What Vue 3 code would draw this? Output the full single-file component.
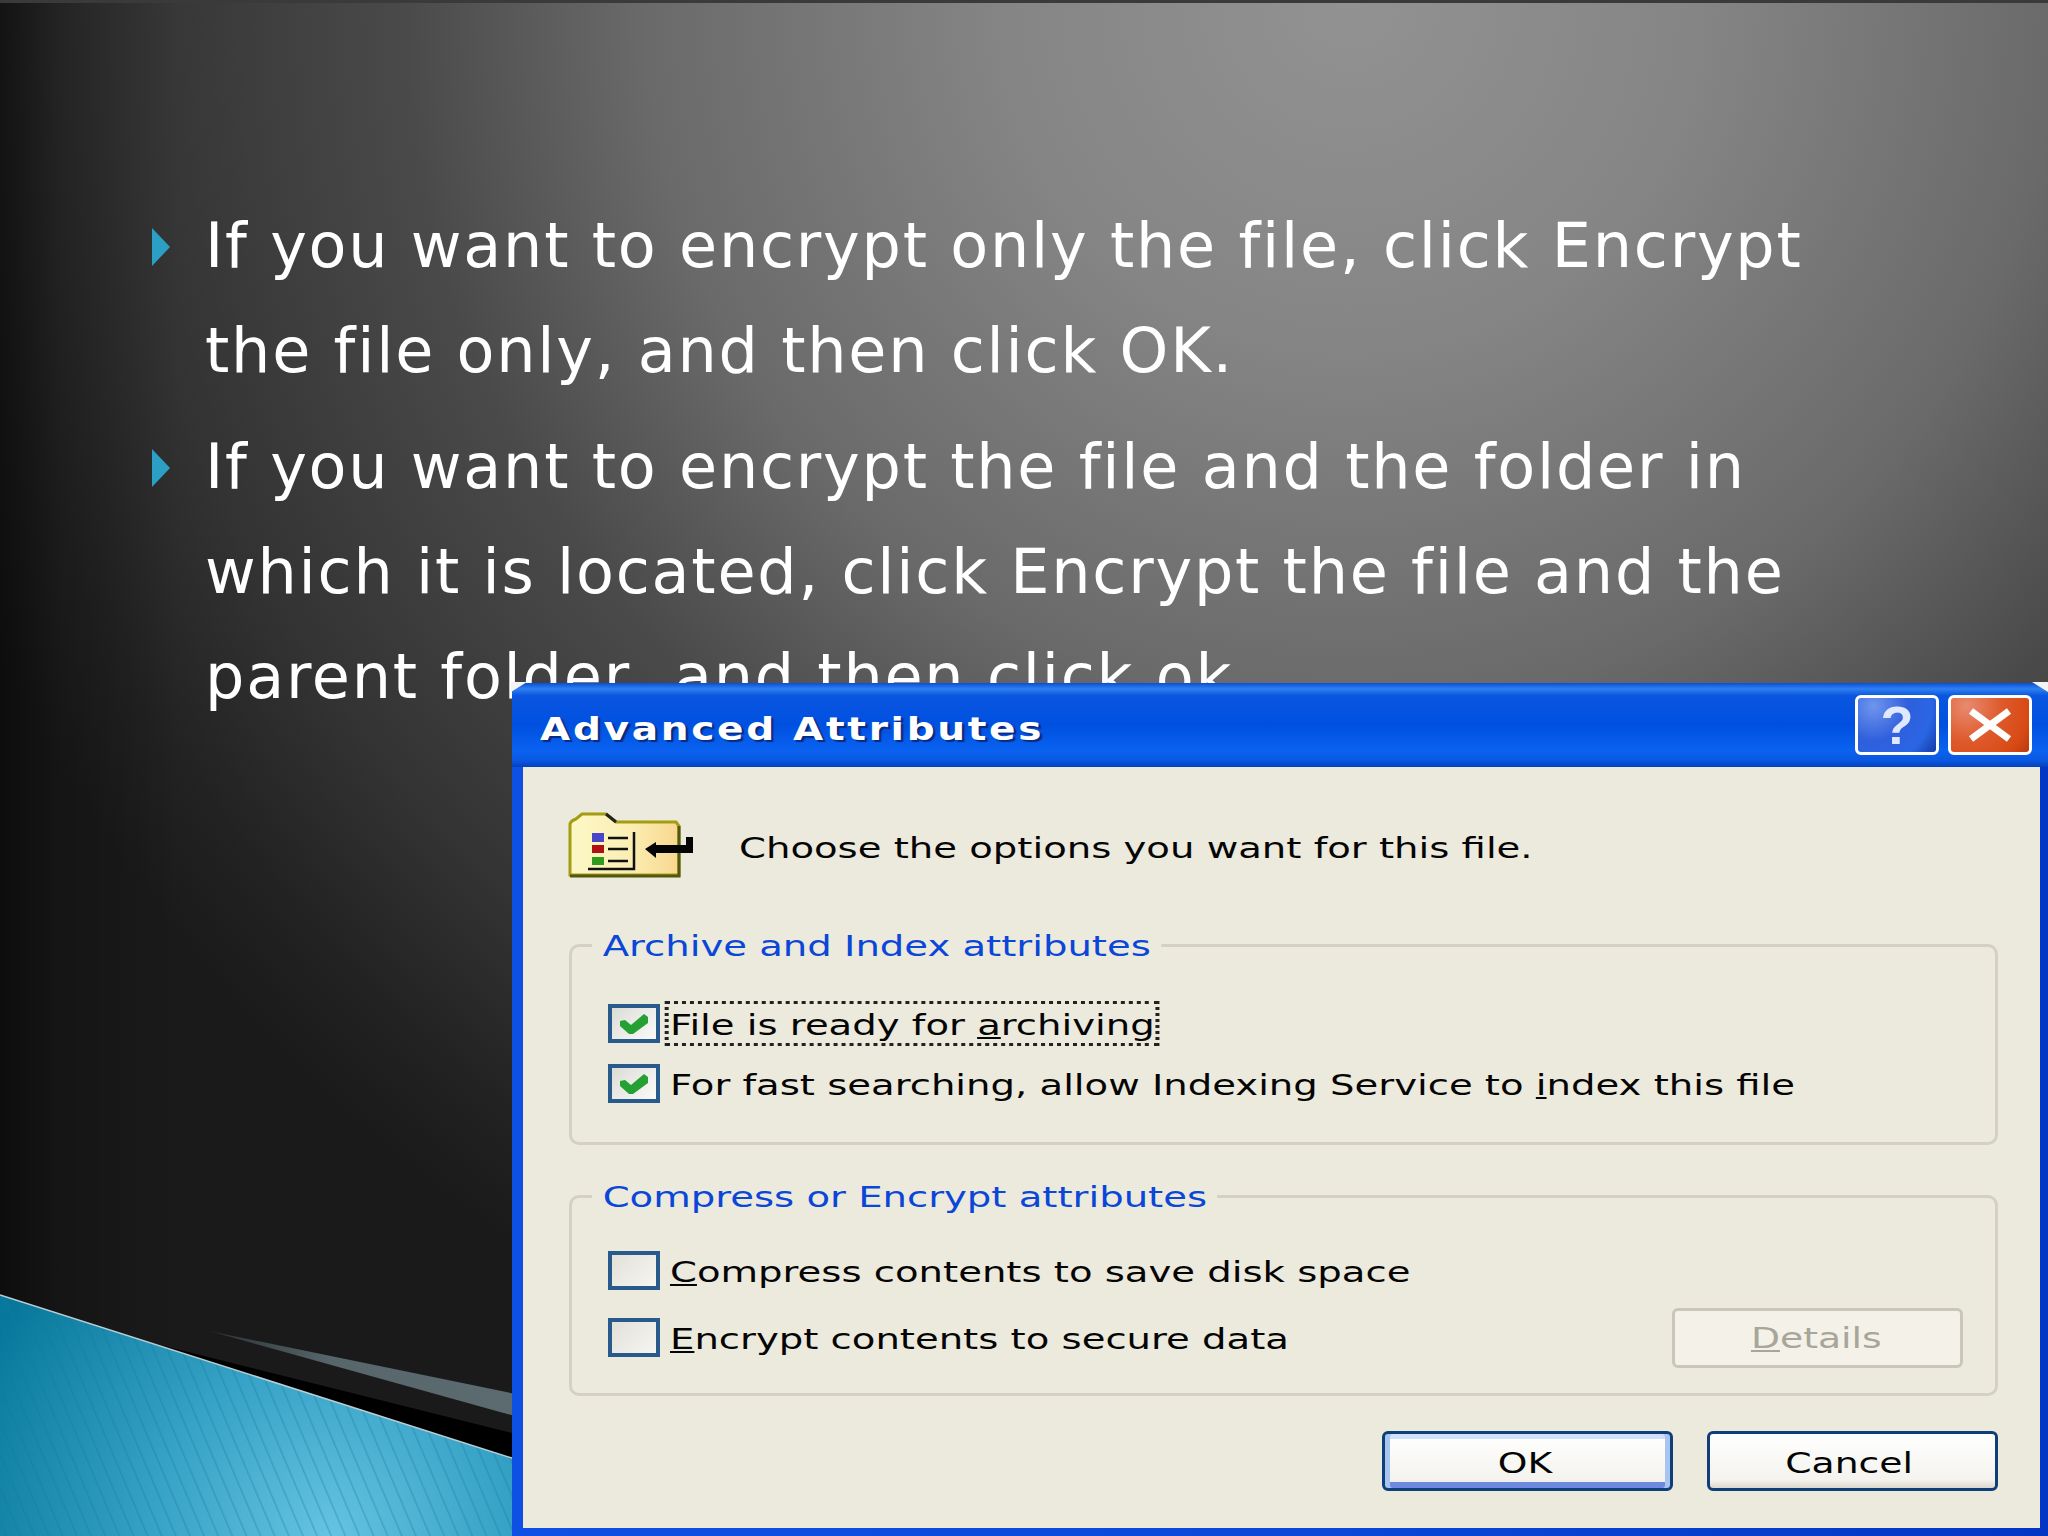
<script setup>
const bullets = [
  ['If you want to encrypt only the file, click Encrypt', 'the file only, and then click OK.'],
  ['If you want to encrypt the file and the folder in', 'which it is located, click Encrypt the file and the', 'parent folder, and then click ok.'],
]
const checkShape = '0,7 5,6 11,11 24,0 28,3 28,9 13,20 9,20 0,12'
</script>

<template>
  <main class="slide">
    <svg class="corner" viewBox="0 0 540 246" width="540" height="246" aria-hidden="true">
      <defs>
        <radialGradient id="blue" gradientUnits="userSpaceOnUse" cx="330" cy="246" r="390">
          <stop offset="0" stop-color="#66c3e2" />
          <stop offset="0.45" stop-color="#37a3c6" />
          <stop offset="1" stop-color="#07789b" />
        </radialGradient>
        <linearGradient id="sliver" gradientUnits="userSpaceOnUse" x1="209" y1="0" x2="512" y2="0">
          <stop offset="0" stop-color="#2a3032" />
          <stop offset="0.4" stop-color="#56666b" />
          <stop offset="1" stop-color="#5c6b70" />
        </linearGradient>
        <pattern id="stripes" width="13" height="13" patternUnits="userSpaceOnUse" patternTransform="rotate(-23)">
          <rect x="0" width="1.5" height="13" fill="#17799a" opacity="0.35" />
        </pattern>
      </defs>
      <polygon points="0,5 540,177 540,246 0,246" fill="url(#blue)" />
      <polygon points="0,5 540,177 540,246 0,246" fill="url(#stripes)" />
      <polygon points="148,52 540,150 540,177" fill="#000" />
      <polygon points="209,41 540,109 540,133" fill="url(#sliver)" />
      <line x1="0" y1="5" x2="540" y2="177" stroke="#b8cfd6" stroke-width="1.5" />
    </svg>

    <section class="points">
      <div v-for="(lines, i) in bullets" :key="i" class="point">
        <svg class="arrow" viewBox="0 0 18 38" width="18" height="38" aria-hidden="true">
          <polygon points="0,0 18,19 0,38" fill="#2ba0c4" />
        </svg>
        <p class="copy">
          <span v-for="line in lines" :key="line" class="line">{{ line }}</span>
        </p>
      </div>
    </section>

    <div class="dialog">
      <header class="titlebar">
        <span class="title">Advanced Attributes</span>
        <div class="caption-buttons">
          <span class="cap help">?</span>
          <span class="cap close">
            <svg viewBox="0 0 44 34" width="44" height="34" aria-hidden="true">
              <path d="M3 3 L41 31 M41 3 L3 31" stroke="#fff" stroke-width="7" fill="none" />
            </svg>
          </span>
        </div>
      </header>

      <div class="client">
        <div class="intro">
          <svg class="folder" viewBox="0 0 126 66" width="126" height="66" aria-hidden="true">
            <defs>
              <linearGradient id="folderFill" x1="0" y1="0" x2="1" y2="0">
                <stop offset="0" stop-color="#fbf8c6" />
                <stop offset="0.55" stop-color="#fbeeb4" />
                <stop offset="1" stop-color="#f8d78e" />
              </linearGradient>
            </defs>
            <path d="M2 63 V13 Q2 9 8 7 L14 2 H38 L48 10 H108 L111 14 V63 Z" fill="url(#folderFill)" stroke="#a49c12" stroke-width="3" />
            <path d="M2 64 H111 V14" fill="none" stroke="#53570f" stroke-width="3" />
            <path d="M38 2 L48 10" stroke="#222" stroke-width="3" />
            <path d="M66 20 V57 H20" fill="none" stroke="#111" stroke-width="2.5" />
            <rect x="24" y="21" width="12" height="9" fill="#4a45c8" />
            <rect x="24" y="33" width="12" height="8" fill="#ad0f12" />
            <rect x="24" y="45" width="12" height="8" fill="#2f9a1c" />
            <path d="M40 26 H60 M40 37 H60 M40 49 H60" stroke="#111" stroke-width="2.5" />
            <path d="M77 37 L88 30 V33 H118 V25 H125 V41 H88 V46 Z" fill="#050505" />
          </svg>
          <span class="stretch intro-text">Choose the options you want for this file.</span>
        </div>

        <div class="group group-one">
          <span class="legend stretch">Archive and Index attributes</span>
          <label class="row">
            <span class="box"><svg viewBox="0 0 28 20" width="28" height="20" aria-hidden="true"><polygon :points="checkShape" fill="#25a032" /></svg></span>
            <span class="text stretch focused">File is ready for <u>a</u>rchiving</span>
          </label>
          <label class="row">
            <span class="box"><svg viewBox="0 0 28 20" width="28" height="20" aria-hidden="true"><polygon :points="checkShape" fill="#25a032" /></svg></span>
            <span class="text stretch">For fast searching, allow Indexing Service to <u>i</u>ndex this file</span>
          </label>
        </div>

        <div class="group group-two">
          <span class="legend stretch">Compress or Encrypt attributes</span>
          <label class="row">
            <span class="box empty"></span>
            <span class="text stretch"><u>C</u>ompress contents to save disk space</span>
          </label>
          <label class="row">
            <span class="box empty"></span>
            <span class="text stretch"><u>E</u>ncrypt contents to secure data</span>
            <button class="details" type="button" disabled><span class="label"><u>D</u>etails</span></button>
          </label>
        </div>

        <footer class="actions">
          <button class="btn default" type="button"><span class="label">OK</span></button>
          <button class="btn" type="button"><span class="label">Cancel</span></button>
        </footer>
      </div>
    </div>
  </main>
</template>

<style>
html, body { margin: 0; background: #000; }
</style>

<style scoped>
.slide {
  position: relative;
  width: 2048px;
  height: 1536px;
  overflow: hidden;
  font-family: "DejaVu Sans", sans-serif;
  background:
    linear-gradient(#3a3a3a, #3a3a3a) 0 0 / 100% 3px no-repeat,
    linear-gradient(90deg, rgba(0, 0, 0, 0.5), rgba(0, 0, 0, 0.2) 60px, rgba(0, 0, 0, 0) 180px),
    radial-gradient(ellipse 1500px 1500px at 1350px 0, #929292 0%, #858585 23%, #6a6a6a 47%, #4a4a4a 63%, #333 82%, #222 93%, #1a1a1a 100%);
}
.corner {
  position: absolute;
  left: 0;
  bottom: 0;
}
.points {
  position: relative;
  padding: 193px 0 0 152px;
}
.point {
  display: flex;
  align-items: flex-start;
  margin-bottom: 11px;
}
.arrow {
  flex: none;
  margin: 35px 35px 0 0;
}
.copy {
  margin: 0;
  color: #fff;
  font-size: 62px;
  line-height: 105px;
  letter-spacing: 1.77px;
  white-space: nowrap;
}
.line { display: block; }

.dialog {
  position: absolute;
  left: 512px;
  top: 683px;
  width: 1536px;
  height: 853px;
  box-sizing: border-box;
  display: flex;
  flex-direction: column;
  padding: 0 8px 8px 11px;
  background: linear-gradient(90deg, #0f50e4 0%, #0a49d8 50%, #0436c4 100%);
}
.dialog::before,
.dialog::after {
  content: "";
  position: absolute;
  top: -1px;
  width: 16px;
  height: 10px;
  background: #f4f4f4;
  z-index: 1;
}
.dialog::before {
  left: -1px;
  clip-path: polygon(0 0, 100% 0, 0 100%);
}
.dialog::after {
  right: 0;
  clip-path: polygon(0 0, 100% 0, 100% 100%);
}
.titlebar {
  flex: none;
  height: 84px;
  margin: 0 -8px 0 -11px;
  padding: 8px 16px 0 28px;
  box-sizing: border-box;
  display: flex;
  align-items: center;
  justify-content: space-between;
  background: linear-gradient(180deg, #0a4fd6 0%, #2f80f0 7%, #0a56e0 15%, #0050e0 50%, #0a62f0 80%, #0a58e0 92%, #0440c0 100%);
}
.title {
  display: inline-block;
  transform: scaleX(1.22);
  transform-origin: left center;
  color: #fff;
  font: bold 32px "DejaVu Sans", sans-serif;
  letter-spacing: 2.2px;
  text-shadow: 2px 2px 1px #0a2a80;
}
.caption-buttons {
  display: flex;
  gap: 9px;
  margin-top: -8px;
}
.cap {
  box-sizing: border-box;
  width: 84px;
  height: 60px;
  display: flex;
  align-items: center;
  justify-content: center;
  border: 3px solid #fff;
  border-radius: 6px;
  color: #dfe8ff;
  font: bold 54px "Liberation Sans", sans-serif;
}
.help { background: radial-gradient(circle at 20% 15%, #6f95ee 0%, #2f5fdc 45%, #2a66e4 75%, #123aa8 100%); }
.close { background: radial-gradient(circle at 20% 15%, #e88a70 0%, #de5a2c 45%, #d84a14 80%, #b83a10 100%); }

.client {
  flex: 1;
  box-sizing: border-box;
  padding: 45px 42px 0 46px;
  background: #ece9dd;
  color: #050505;
  font-family: "DejaVu Sans", sans-serif;
  font-size: 29px;
}
.stretch {
  display: inline-block;
  transform: scaleX(1.33);
  transform-origin: left center;
}
.intro {
  height: 66px;
  display: flex;
  align-items: center;
  gap: 45px;
  margin-left: -1px;
}
.intro-text { padding-top: 5px; }
.folder { flex: none; }
.group {
  position: relative;
  box-sizing: border-box;
  border: 3px solid #d4d1c4;
  border-radius: 10px;
  padding-left: 36px;
  padding-right: 32px;
  display: flex;
  flex-direction: column;
}
.group-one {
  height: 201px;
  margin-top: 66px;
  padding-top: 57px;
  gap: 21px;
}
.group-two {
  height: 201px;
  margin-top: 50px;
  padding-top: 53px;
  gap: 28px;
}
.legend {
  position: absolute;
  left: 20px;
  top: -19px;
  padding: 0 8px;
  line-height: 36px;
  background: #ece9dd;
  color: #0a46d8;
}
.row {
  height: 39px;
  display: flex;
  align-items: center;
  gap: 10px;
}
.box {
  flex: none;
  box-sizing: border-box;
  width: 52px;
  height: 39px;
  display: flex;
  align-items: center;
  justify-content: center;
  border: 4px solid #285a8c;
  background: linear-gradient(135deg, #dcdcd6, #fafafa);
}
.box.empty { background: linear-gradient(135deg, #e2e0d8, #f6f6f2); }
.text { white-space: nowrap; padding-top: 3px; }
.focused { outline: 3px dotted #222; outline-offset: 1px; }
.details {
  box-sizing: border-box;
  width: 291px;
  height: 60px;
  margin-left: auto;
  padding-right: 8px;
  flex: none;
  border: 3px solid #cac7ba;
  border-radius: 6px;
  background: #f4f2e8;
  color: #a7a698;
  font: inherit;
}
.label {
  display: inline-block;
  transform: scaleX(1.3);
}
.actions {
  display: flex;
  justify-content: flex-end;
  gap: 34px;
  margin-top: 35px;
}
.btn {
  box-sizing: border-box;
  width: 291px;
  height: 60px;
  padding: 4px 6px 0 0;
  border: 3px solid #0f3f78;
  border-radius: 6px;
  background: linear-gradient(180deg, #fff 0%, #f4f3ee 85%, #dcd8cc 100%);
  color: #050505;
  font: inherit;
}
.default {
  box-shadow: inset 5px 0 0 #a8c4f0, inset -5px 0 0 #a8c4f0, inset 0 5px 0 #cfe0f8, inset 0 -6px 0 #6d8ae0;
}
</style>
